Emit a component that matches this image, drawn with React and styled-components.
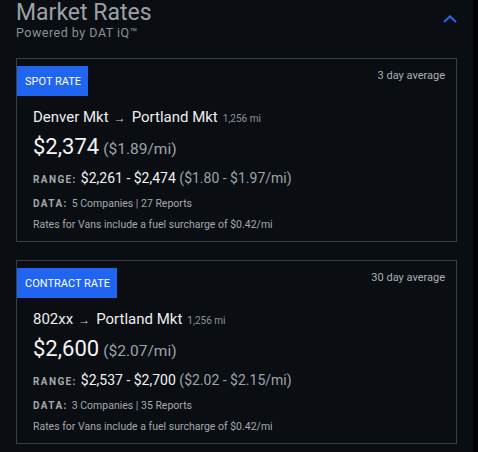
import React from "react"
import styled, { createGlobalStyle } from "styled-components"

const rates = [
  {
    tag: "SPOT RATE",
    average: "3 day average",
    origin: "Denver Mkt",
    destination: "Portland Mkt",
    miles: "1,256 mi",
    price: "$2,374",
    perMile: "($1.89/mi)",
    range: "$2,261 - $2,474",
    rangePerMile: "($1.80 - $1.97/mi)",
    data: "5 Companies | 27 Reports",
  },
  {
    tag: "CONTRACT RATE",
    average: "30 day average",
    origin: "802xx",
    destination: "Portland Mkt",
    miles: "1,256 mi",
    price: "$2,600",
    perMile: "($2.07/mi)",
    range: "$2,537 - $2,700",
    rangePerMile: "($2.02 - $2.15/mi)",
    data: "3 Companies | 35 Reports",
  },
]

export default function App() {
  return (
    <>
      <GlobalStyle />
      <Panel>
        <Header>
          <div>
            <Title>Market Rates</Title>
            <Subtitle>Powered by DAT iQ™</Subtitle>
          </div>
          <Collapse aria-label="collapse">
            <svg width="14" height="8" viewBox="0 0 14 8">
              <path d="M1 7 L7 1.4 L13 7" fill="none" stroke="#2468f2" strokeWidth="2" />
            </svg>
          </Collapse>
        </Header>
        <Cards>
          {rates.map((r) => (
            <Card key={r.tag}>
              <TopRow>
                <Tag>{r.tag}</Tag>
                <Average>{r.average}</Average>
              </TopRow>
              <Body>
                <Route>
                  {r.origin}
                  <Arrow>→</Arrow>
                  {r.destination}
                  <Miles>{r.miles}</Miles>
                </Route>
                <Price>
                  {r.price}
                  <PerMile>{r.perMile}</PerMile>
                </Price>
                <RangeRow>
                  <Label>RANGE:</Label>
                  <strong>{r.range}</strong> <Muted>{r.rangePerMile}</Muted>
                </RangeRow>
                <DataRow>
                  <Label>DATA:</Label>
                  {r.data}
                </DataRow>
                <Note>Rates for Vans include a fuel surcharge of $0.42/mi</Note>
              </Body>
            </Card>
          ))}
        </Cards>
      </Panel>
    </>
  )
}

const GlobalStyle = createGlobalStyle`
  body {
    margin: 0;
    background: #000;
    font-family: Roboto, "Liberation Sans", sans-serif;
  }
`

const Panel = styled.div`
  width: 473px;
  min-height: 452px;
  box-sizing: border-box;
  padding: 0 16px 0 16px;
  background: #0a0d11;
`

const Header = styled.div`
  display: flex;
  justify-content: space-between;
  align-items: flex-start;
`

const Title = styled.div`
  font-size: 23px;
  line-height: 25px;
  color: #9ba1a8;
`

const Subtitle = styled.div`
  font-size: 12.5px;
  line-height: 14px;
  margin-top: 1px;
  color: #8b9199;
  letter-spacing: 0.5px;
`

const Collapse = styled.button`
  border: none;
  background: none;
  padding: 0;
  margin: 15px 0 0 0;
  display: flex;
`

const Cards = styled.div`
  display: flex;
  flex-direction: column;
  gap: 18px;
  margin-top: 18px;
`

const Card = styled.div`
  border: 1px solid #36404b;
  height: 184px;
  box-sizing: border-box;
`

const TopRow = styled.div`
  display: flex;
  justify-content: space-between;
  align-items: flex-start;
`

const Tag = styled.div`
  margin-top: 7px;
  height: 30px;
  padding: 0 7px 0 8px;
  display: flex;
  align-items: center;
  background: #1f65f0;
  color: #fff;
  font-size: 11px;
`

const Average = styled.div`
  margin: 10px 11px 0 0;
  font-size: 11px;
  line-height: 14px;
  color: #a9afb6;
`

const Body = styled.div`
  padding: 0 16px;
  display: flex;
  flex-direction: column;
`

const Route = styled.div`
  margin-top: 11px;
  font-size: 15px;
  line-height: 20px;
  color: #eceef0;
`

const Arrow = styled.span`
  font-size: 12px;
  margin: 0 6px 0 5px;
  color: #c8ccd0;
`

const Miles = styled.span`
  font-size: 10px;
  margin-left: 5px;
  color: #8e949b;
`

const Price = styled.div`
  margin-top: 5px;
  font-size: 22px;
  line-height: 26px;
  color: #f3f4f5;
`

const PerMile = styled.span`
  font-size: 15.5px;
  margin-left: 4px;
  color: #9ea4ab;
`

const RangeRow = styled.div`
  margin-top: 7px;
  font-size: 14px;
  line-height: 18px;
  color: #f1f2f3;

  strong {
    font-weight: 400;
  }
`

const Muted = styled.span`
  color: #9ea4ab;
`

const Label = styled.span`
  font-size: 10px;
  font-weight: 700;
  letter-spacing: 1.4px;
  color: #a3a9b0;
  margin-right: 4px;
`

const DataRow = styled.div`
  margin-top: 8px;
  font-size: 10.5px;
  line-height: 14px;
  color: #a3a9b0;
`

const Note = styled.div`
  margin-top: 7px;
  font-size: 10.5px;
  line-height: 14px;
  color: #a3a9b0;
`
